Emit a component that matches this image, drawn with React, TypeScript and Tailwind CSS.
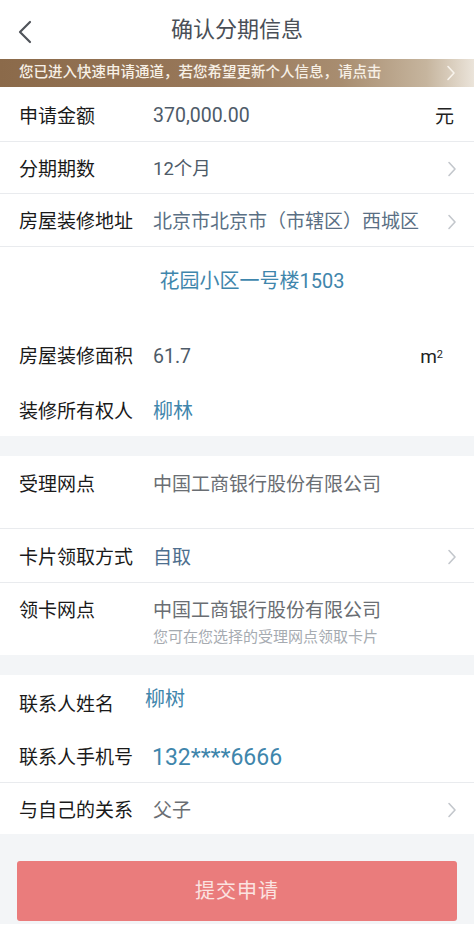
import React from "react";

const font = { fontFamily: 'Roboto, "Noto Sans CJK SC", "Noto Sans", sans-serif' };

function Chevron({ className = "" }: { className?: string }) {
  return (
    <svg width="10" height="16" viewBox="0 0 10 16" className={className} fill="none">
      <path d="M2 1.5 L8 8 L2 14.5" stroke="currentColor" strokeWidth="1.6" strokeLinecap="round" strokeLinejoin="round" />
    </svg>
  );
}

function Divider() {
  return <div className="h-px bg-[#e9ebee]" />;
}

function Gap({ h }: { h: string }) {
  return <div className={`${h} bg-[#f3f5f7]`} />;
}

export default function App() {
  return (
    <div className="w-[474px] h-[937px] bg-white overflow-hidden text-[#1a1a1a]" style={font}>
      {/* Header */}
      <div className="relative h-[59px] flex items-center justify-center">
        <svg width="16" height="24" viewBox="0 0 16 24" className="absolute left-[17px] top-[20px] text-[#50545a]" fill="none">
          <path d="M13 2 L3 12 L13 22" stroke="currentColor" strokeWidth="2.2" strokeLinecap="round" strokeLinejoin="round" />
        </svg>
        <div className="text-[22px] text-[#4a4f57] leading-none">确认分期信息</div>
      </div>

      {/* Banner */}
      <div className="h-[28px] flex items-center justify-between pl-[19px] pr-[18px] bg-[linear-gradient(90deg,#8b6a4a_0%,#98785a_45%,#a88d70_72%,#c6b59e_90%,#ebe4da_100%)]">
        <span className="text-[14.5px] text-[#f7f0e6] font-medium leading-none">您已进入快速申请通道，若您希望更新个人信息，请点击</span>
        <Chevron className="text-[#f8f3ec]" />
      </div>

      {/* Row: amount */}
      <div className="h-[54px] flex items-center pt-[4px] pl-[19px] pr-[20px]">
        <span className="w-[134px] text-[19px] leading-none">申请金额</span>
        <span className="flex-1 text-[19.5px] text-[#4e5b68] leading-none">370,000.00</span>
        <span className="text-[19px] leading-none text-[#222]">元</span>
      </div>
      <Divider />
      <div className="h-[51px] flex items-center pt-[3px] pl-[19px] pr-[17px]">
        <span className="w-[134px] text-[19px] leading-none">分期期数</span>
        <span className="flex-1 text-[18.5px] text-[#4e5b68] leading-none">12个月</span>
        <Chevron className="text-[#c3c7cc]" />
      </div>
      <Divider />
      <div className="h-[52px] flex items-center pt-[3px] pl-[19px] pr-[17px]">
        <span className="w-[134px] text-[19px] leading-none">房屋装修地址</span>
        <span className="flex-1 text-[19px] text-[#5a6f84] leading-none">北京市北京市（市辖区）西城区</span>
        <Chevron className="text-[#c3c7cc]" />
      </div>
      <Divider />

      {/* Address detail */}
      <div className="h-[80px] flex justify-center pt-[21px] pl-[30px]">
        <span className="text-[20px] text-[#3f86ac] leading-[26px]">花园小区一号楼1503</span>
      </div>
      <div className="h-[56px] flex items-center pt-[3px] pl-[19px] pr-[31px]">
        <span className="w-[134px] text-[19px] leading-none">房屋装修面积</span>
        <span className="flex-1 text-[19.5px] text-[#4e5b68] leading-none">61.7</span>
        <span className="text-[19px] leading-none text-[#222]">
          m<sup className="text-[11px]">2</sup>
        </span>
      </div>
      <div className="h-[53px] flex items-center pt-[3px] pl-[19px] pr-[20px]">
        <span className="w-[134px] text-[19px] leading-none">装修所有权人</span>
        <span className="flex-1 text-[20px] text-[#3f86ac] leading-none">柳林</span>
      </div>
      <Gap h="h-[20px]" />

      {/* Branch */}
      <div className="h-[72px] flex items-start pt-[16px] pl-[19px] pr-[20px]">
        <span className="w-[134px] text-[19px] leading-[26px]">受理网点</span>
        <span className="flex-1 text-[19px] text-[#6a6e73] leading-[26px] whitespace-nowrap">中国工商银行股份有限公司</span>
      </div>
      <Divider />
      <div className="h-[53px] flex items-center pt-[3px] pl-[19px] pr-[17px]">
        <span className="w-[134px] text-[19px] leading-none">卡片领取方式</span>
        <span className="flex-1 text-[19px] text-[#4e6f8e] leading-none">自取</span>
        <Chevron className="text-[#c3c7cc]" />
      </div>
      <Divider />
      <div className="h-[72px] flex items-start pt-[15px] pl-[19px] pr-[20px]">
        <span className="w-[134px] text-[19px] leading-[26px]">领卡网点</span>
        <div className="flex flex-col">
          <span className="text-[19px] text-[#6a6e73] leading-[26px] whitespace-nowrap">中国工商银行股份有限公司</span>
          <span className="text-[15px] text-[#a6abb1] leading-[24px] mt-[1px]">您可在您选择的受理网点领取卡片</span>
        </div>
      </div>
      <Gap h="h-[20px]" />

      {/* Contact */}
      <div className="h-[54px] flex items-center pt-[3px] pl-[19px] pr-[20px]">
        <span className="w-[126px] text-[19px] leading-none mt-[2px]">联系人姓名</span>
        <span className="flex-1 text-[20px] text-[#3f86ac] leading-none mb-[10px]">柳树</span>
      </div>
      <div className="h-[53px] flex items-center pt-[3px] pl-[19px] pr-[20px]">
        <span className="w-[133px] text-[19px] leading-none">联系人手机号</span>
        <span className="flex-1 text-[23px] text-[#3f86ac] leading-none">132****6666</span>
      </div>
      <Divider />
      <div className="h-[51px] flex items-center pt-[3px] pl-[19px] pr-[17px]">
        <span className="w-[134px] text-[19px] leading-none">与自己的关系</span>
        <span className="flex-1 text-[19px] text-[#6a6e73] leading-none">父子</span>
        <Chevron className="text-[#c3c7cc]" />
      </div>

      {/* Bottom */}
      <div className="h-[90px] bg-[#f3f5f7] pt-[27px] px-[17px]">
        <div className="h-[60px] rounded-[3px] bg-[#ea7c7c] flex items-center justify-center">
          <span className="text-[20px] text-[#fbe3e1] leading-none tracking-[1px]">提交申请</span>
        </div>
      </div>
    </div>
  );
}
